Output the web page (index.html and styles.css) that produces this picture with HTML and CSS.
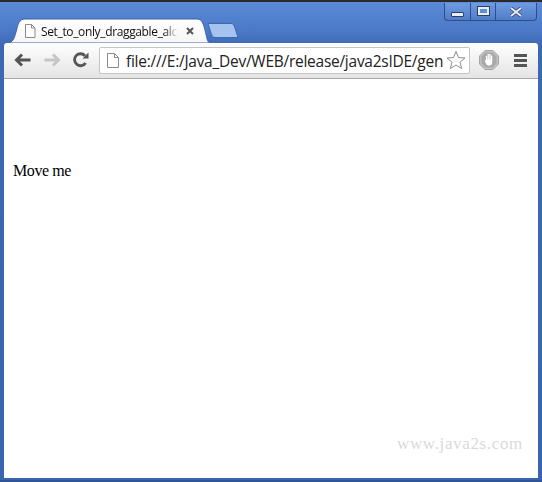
FILE: index.html
```html
<!DOCTYPE html>
<html>

<head>
  <meta charset="UTF-8">
  <title>Set_to_only_draggable_along_x_axis</title>
  <link rel="stylesheet" href="styles.css">
</head>

<body>
  <div class="window">
    <div class="titlebar">
      <div class="tab">
        <svg class="tab-shape" width="202" height="25" viewBox="0 0 202 25">
          <defs>
            <linearGradient id="tabfill" x1="0" y1="0" x2="0" y2="1">
              <stop offset="0" stop-color="#ffffff" />
              <stop offset="1" stop-color="#f6f6f6" />
            </linearGradient>
          </defs>
          <path d="M0 25C5 24 6 21 8 14C10 6 11 1 17 1H189C194 1 195 5 197 12C199 20 199 24 202 25Z" fill="url(#tabfill)" stroke="#3a62a8" stroke-width="1" />
        </svg>
        <svg class="tab-page" width="12" height="14" viewBox="0 0 12 14">
          <path d="M1.5 .5H7.5L11 4V13.5H1.5Z" fill="#fff" stroke="#8a8a8a" />
          <path d="M7.5 .5V4H11" fill="none" stroke="#8a8a8a" />
        </svg>
        <span class="tab-title">Set_to_only_draggable_alc</span>
        <svg class="tab-close" width="8" height="8" viewBox="0 0 8 8">
          <path d="M1 1L7 7M7 1L1 7" stroke="#555" stroke-width="2" />
        </svg>
      </div>
      <svg class="new-tab" width="32" height="15" viewBox="0 0 32 15">
        <path d="M1 .5H24C26 .5 27 2 28 5L31 14.5H8C6 14.5 5 13 4 10Z" fill="#a4c4ef" stroke="#3f68ad" />
      </svg>
      <div class="win-buttons">
        <div class="win-btn win-min"><span class="min-bar"></span></div>
        <div class="win-btn win-max"><span class="max-box"></span></div>
        <div class="win-btn win-close">
          <svg width="14" height="10" viewBox="0 0 14 10">
            <path d="M2 1L12 9M12 1L2 9" stroke="#2c3f66" stroke-width="3.4" />
            <path d="M2 1L12 9M12 1L2 9" stroke="#e8eef8" stroke-width="2" />
          </svg>
        </div>
      </div>
    </div>

    <div class="toolbar">
      <svg class="tool-icon" width="18" height="14" viewBox="0 0 18 14">
        <path d="M16.5 7H3M8 1.500L2.500 7L8 12.500" fill="none" stroke="#555" stroke-width="3" />
      </svg>
      <svg class="tool-icon" width="18" height="14" viewBox="0 0 18 14">
        <path d="M1.500 7H15M10 1.500L15.500 7L10 12.500" fill="none" stroke="#c6c6c6" stroke-width="3" />
      </svg>
      <svg class="tool-icon" width="16" height="16" viewBox="0 0 16 16">
        <path d="M12.600 11A6 6 0 1 1 12 3.700" fill="none" stroke="#555" stroke-width="2.800" />
        <path d="M9.500 6.500H15.500V.5Z" fill="#555" />
      </svg>
      <div class="omnibox">
        <svg class="page-icon" width="12" height="15" viewBox="0 0 12 15">
          <path d="M.5 .5H7.500L11.500 4.500V14.500H.5Z" fill="#fff" stroke="#8a8a8a" />
          <path d="M7.500 .5V4.500H11.500" fill="none" stroke="#8a8a8a" />
        </svg>
        <span class="url">file:///E:/Java_Dev/WEB/release/java2sIDE/gen</span>
        <svg class="star" width="20" height="20" viewBox="0 0 20 20">
          <path d="M10 1.500L12.500 7.600L19 8L14 12.200L15.700 18.600L10 15L4.300 18.600L6 12.200L1 8L7.500 7.600Z" fill="#fff" stroke="#8c8c8c" />
        </svg>
      </div>
      <svg class="adblock" width="20" height="20" viewBox="0 0 20 20">
        <path d="M6 .5H14L19.500 6V14L14 19.500H6L.5 14V6Z" fill="#c2c2c2" stroke="#a6a6a6" />
        <path d="M6.500 2.500H13.500L17.500 6.500V13.500L13.500 17.500H6.500L2.500 13.500V6.500Z" fill="#a9a9a9" />
        <path d="M7.500 10V6.500M9.200 10V4.500M10.900 10V4.500M12.600 10.500V6" fill="none" stroke="#fff" stroke-width="1.300" stroke-linecap="round" />
        <path d="M6.800 9.500H13.200V12.500C13.200 14.500 12 15.500 10.200 15.500C8.500 15.500 7.500 14.800 6.800 13.200L5.500 10.500L6.800 10.500Z" fill="#fff" />
      </svg>
      <div class="menu-icon"><span></span><span></span><span></span></div>
    </div>

    <div class="page">
      <p class="move-me">Move me</p>
      <span class="watermark">www.java2s.com</span>
    </div>
  </div>
</body>

</html>
```

FILE: styles.css
```css
html,
body {
  margin: 0;
  padding: 0;
}

body {
  width: 542px;
  height: 482px;
  overflow: hidden;
  background: #fff;
}

.window {
  height: 482px;
  box-sizing: border-box;
  display: flex;
  flex-direction: column;
  padding: 0 4px 4px;
  border-top: 2px solid #2a2a2a;
  background: linear-gradient(#5b8bd8 0, #4a78c6 30px, #3d68b4 44px, #3b64ae 100%);
  box-shadow: inset 0 -2px 0 #2f5597;
}

.titlebar {
  height: 41px;
  flex: none;
  position: relative;
  display: flex;
  align-items: flex-end;
  padding-left: 4px;
}

.tab {
  width: 202px;
  height: 25px;
  position: relative;
  display: flex;
  align-items: center;
  padding: 1px 0 0 16px;
  box-sizing: border-box;
}

.tab-shape {
  position: absolute;
  left: 0;
  top: 0;
}

.tab-page,
.tab-title,
.tab-close {
  position: relative;
}

.tab-title {
  width: 137px;
  margin-left: 5px;
  overflow: hidden;
  white-space: nowrap;
  font: 12px "Open Sans", "Liberation Sans", sans-serif;
  letter-spacing: -0.36px;
  color: #111;
  -webkit-mask-image: linear-gradient(to right, #000 90%, transparent);
  mask-image: linear-gradient(to right, #000 90%, transparent);
}

.tab-close {
  margin-left: 8px;
}

.new-tab {
  margin: 0 0 5px -3px;
}

.win-buttons {
  position: absolute;
  top: 1px;
  right: 1px;
  height: 17px;
  display: flex;
  border: 1px solid #2f4d86;
  border-top: 0;
  border-radius: 0 0 4px 4px;
  background: linear-gradient(#6f9be0, #4f7dca);
}

.win-btn {
  display: flex;
  align-items: center;
  justify-content: center;
  border-left: 1px solid #2f4d86;
}

.win-min {
  width: 25px;
  border-left: 0;
}

.win-max {
  width: 24px;
}

.win-close {
  width: 40px;
}

.min-bar {
  width: 11px;
  height: 3px;
  margin-top: 6px;
  background: #e8eef8;
  border: 1px solid #2c3f66;
  border-radius: 1px;
}

.max-box {
  width: 7px;
  height: 4px;
  border: 2px solid #e8eef8;
  outline: 1px solid #2c3f66;
  margin-top: -2px;
}

.toolbar {
  height: 36px;
  flex: none;
  box-sizing: border-box;
  display: flex;
  align-items: center;
  padding: 0 9px 1px 10px;
  border-radius: 3px 3px 0 0;
  border-bottom: 1px solid #a8a8a8;
  background: linear-gradient(#ffffff, #f4f4f4 40%, #e4e4e4);
}

.tool-icon {
  flex: none;
  margin-right: 11px;
}

.tool-icon:nth-child(2) {
  margin-right: 12px;
}

.tool-icon:nth-child(3) {
  margin-right: 10px;
}

.omnibox {
  width: 371px;
  height: 27px;
  flex: none;
  box-sizing: border-box;
  display: flex;
  align-items: center;
  padding-left: 7px;
  background: #fff;
  border: 1px solid #c4c4c4;
  border-radius: 2px;
}

.page-icon {
  flex: none;
}

.url {
  width: 318px;
  flex: none;
  margin-left: 7px;
  padding-top: 1px;
  overflow: hidden;
  white-space: nowrap;
  font: 15.5px "Open Sans", "Liberation Sans", sans-serif;
  letter-spacing: -0.26px;
  color: #222;
}

.star {
  flex: none;
  margin-left: 2px;
}

.adblock {
  flex: none;
  margin-left: 9px;
}

.menu-icon {
  margin-left: 15px;
  width: 13px;
  display: flex;
  flex-direction: column;
  gap: 2px;
}

.menu-icon span {
  height: 3px;
  background: #555;
}

.page {
  flex: 1;
  position: relative;
  background: #fff;
}

.move-me {
  margin: 0;
  padding: 83px 0 0 9px;
  font: 16px "Liberation Serif", serif;
  letter-spacing: -0.4px;
  color: #000;
}

.watermark {
  position: absolute;
  right: 15px;
  bottom: 24px;
  font: 17px "Liberation Serif", serif;
  letter-spacing: 0.65px;
  color: #d9d9d9;
}
```
